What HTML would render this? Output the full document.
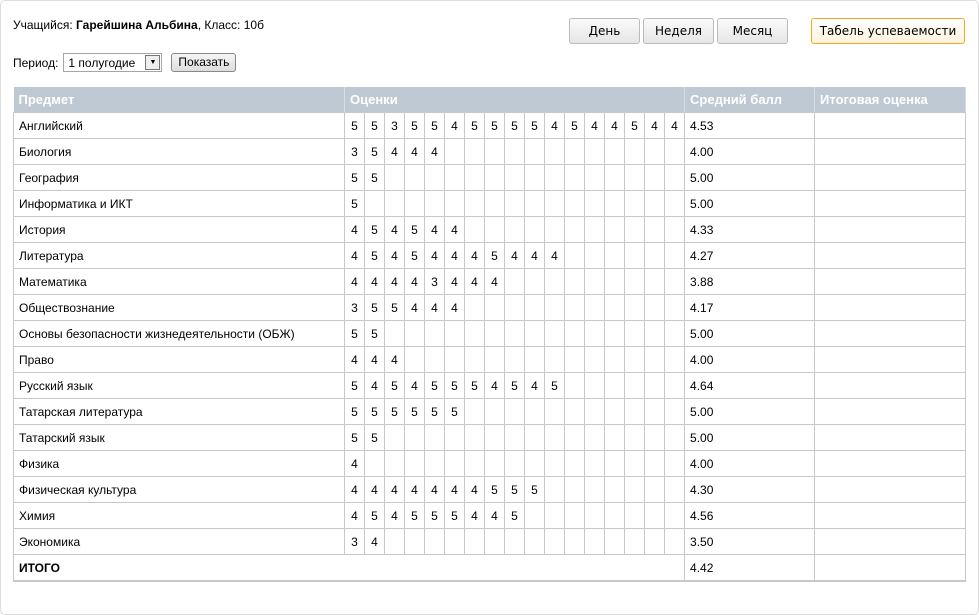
<!DOCTYPE html>
<html><head><meta charset="utf-8"><style>
body{margin:0;width:979px;height:615px;background:#fff;font-family:"Liberation Sans",Arial,sans-serif;font-size:12px;color:#000;overflow:hidden;position:relative}
.frame{position:absolute;left:0;top:0;width:977px;height:613px;border:1px solid #ddd;border-radius:5px}
.info{position:absolute;left:13px;top:18px}
.per{position:absolute;left:13px;top:53px;display:flex;align-items:center}
.sel{margin-left:5px;width:99px;height:19px;border:1px solid #a5a5a5;box-sizing:border-box;display:flex;align-items:center;padding-left:4px;position:relative;font-size:12px}
.sel .ar{position:absolute;right:1px;top:1px;width:15px;height:15px;border:1px solid #777;box-sizing:border-box;background:#eee;font-size:7px;text-align:center;line-height:13px}
.show{margin-left:9px;height:19px;border:1px solid #888;border-radius:3px;background:linear-gradient(#f6f6f6,#ddd);padding:0 6px;line-height:17px;box-sizing:border-box}
.btn{position:absolute;top:18px;height:26px;border:1px solid #bbb;border-radius:3px;background:linear-gradient(#fafafa,#e6e6e6);box-sizing:border-box;text-align:center;line-height:24px;font-family:"DejaVu Sans",sans-serif;font-size:12px}
.b4{border-color:#f5a623;background:linear-gradient(#fff,#fff3dc)}
table{position:absolute;left:13px;top:87px;border-collapse:collapse;width:952px;table-layout:fixed}
th{background:#bfc9d4;color:#fff;font-weight:bold;font-size:13px;text-align:left;height:25px;padding:0 0 0 5px;border-right:1px solid #d8dee4;border-bottom:1px solid #c8c8c8}
td{height:25px;border:1px solid #c8c8c8;padding:0 0 0 5px;white-space:nowrap}
td.g{padding:0;text-align:center}
tr.it td{border-bottom:2px solid #c8c8c8;font-weight:bold}
</style></head><body>
<div class="frame"></div>
<div class="info">Учащийся: <b>Гарейшина Альбина</b>, Класс: 10б</div>
<div class="per">Период:<div class="sel">1 полугодие<div class="ar">▼</div></div><div class="show">Показать</div></div>
<div class="btn" style="left:569px;width:71px">День</div>
<div class="btn" style="left:643px;width:71px">Неделя</div>
<div class="btn" style="left:717px;width:71px">Месяц</div>
<div class="btn b4" style="left:811px;width:154px">Табель успеваемости</div>
<table id="t">
<colgroup><col style="width:331px"><col span="17" style="width:20px"><col style="width:130px"><col style="width:151px"></colgroup>
<tr><th>Предмет</th><th colspan="17">Оценки</th><th>Средний балл</th><th>Итоговая оценка</th></tr>
</table>
<script>
var d=[["Английский","55355455554544544","4.53"],["Биология","35444","4.00"],["География","55","5.00"],["Информатика и ИКТ","5","5.00"],["История","454544","4.33"],["Литература","45454445444","4.27"],["Математика","44443444","3.88"],["Обществознание","355444","4.17"],["Основы безопасности жизнедеятельности (ОБЖ)","55","5.00"],["Право","444","4.00"],["Русский язык","54545554545","4.64"],["Татарская литература","555555","5.00"],["Татарский язык","55","5.00"],["Физика","4","4.00"],["Физическая культура","4444444555","4.30"],["Химия","454555445","4.56"],["Экономика","34","3.50"]];
var t=document.getElementById('t'),h='';
d.forEach(function(r){h+='<tr><td>'+r[0]+'</td>';for(var i=0;i<17;i++)h+='<td class="g">'+(r[1][i]||'')+'</td>';h+='<td>'+r[2]+'</td><td></td></tr>';});
h+='<tr class="it"><td colspan="18">ИТОГО</td><td style="font-weight:normal">4.42</td><td></td></tr>';
t.insertAdjacentHTML('beforeend',h);
</script>
</body></html>
